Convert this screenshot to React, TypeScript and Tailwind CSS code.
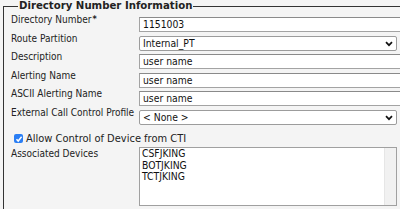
import React from "react";

function TextInput({ value }: { value: string }) {
  return (
    <div className="h-[15px] w-[275px] shrink-0 bg-white border border-[#a3a3a3] border-t-[#8a8a8a] flex items-center pl-[3px] leading-none text-[10.3px] text-[#111]">
      {value}
    </div>
  );
}

function Select({ value }: { value: string }) {
  return (
    <div className="h-[15px] w-[258px] shrink-0 bg-white border border-[#9c9c9c] rounded-[2px] flex items-center justify-between pl-[3px] pr-[3px] leading-none text-[10.3px] text-[#111]">
      <span>{value}</span>
      <svg width="8" height="6" viewBox="0 0 8 6" className="mt-[1px]">
        <path d="M1 1.2 L4 4.2 L7 1.2" fill="none" stroke="#111" strokeWidth="1.7" />
      </svg>
    </div>
  );
}

function Row({ label, children, h, star }: { label: string; children: React.ReactNode; h: string; star?: boolean }) {
  return (
    <div className={`flex items-start ${h}`}>
      <div className="w-[128px] shrink-0 -mt-[3px] leading-[11px] text-[10px] text-[#222] whitespace-nowrap">
        {label}
        {star && <sup className="font-bold text-[9px] ml-[1px] relative -top-[1px]">*</sup>}
      </div>
      {children}
    </div>
  );
}

export default function App() {
  return (
    <div className="w-[400px] h-[209px] overflow-hidden bg-[#f4f4f4] font-['DejaVu_Sans_Condensed','DejaVu_Sans',sans-serif] text-[#222]">
      <fieldset className="ml-[3px] border-l border-t border-[#333] pl-[7px] pt-[5px] h-[240px]">
        <legend className="ml-[7px] px-[1px] font-bold text-[11.3px] leading-[12px] text-[#222]">
          Directory Number Information
        </legend>
        <Row label="Directory Number" h="h-[19px]" star>
          <TextInput value="1151003" />
        </Row>
        <Row label="Route Partition" h="h-[18px]">
          <Select value="Internal_PT" />
        </Row>
        <Row label="Description" h="h-[19px]">
          <TextInput value="user name" />
        </Row>
        <Row label="Alerting Name" h="h-[18px]">
          <TextInput value="user name" />
        </Row>
        <Row label="ASCII Alerting Name" h="h-[19px]">
          <TextInput value="user name" />
        </Row>
        <Row label="External Call Control Profile" h="h-[22px]">
          <Select value="< None >" />
        </Row>
        <div className="flex items-center h-[13px] ml-[3px]">
          <span className="w-[9px] h-[9px] rounded-[2px] bg-[#2a7ef4] flex items-center justify-center">
            <svg width="8" height="8" viewBox="0 0 8 8">
              <path d="M1.5 4.2 L3.2 6 L6.6 1.8" fill="none" stroke="white" strokeWidth="1.5" />
            </svg>
          </span>
          <span className="ml-[3px] text-[11px] leading-[11px] whitespace-nowrap">Allow Control of Device from CTI</span>
        </div>
        <div className="flex items-start mt-[2px]">
          <div className="w-[128px] shrink-0 mt-[1px] leading-[11px] text-[10px]">Associated Devices</div>
          <div className="w-[258px] h-[59px] shrink-0 bg-white border border-[#a0a0a0] flex">
            <div className="flex-1 pl-[2px] text-[10.3px] leading-[11.5px] text-[#111]">
              <div>CSFJKING</div>
              <div>BOTJKING</div>
              <div>TCTJKING</div>
            </div>
            <div className="w-[12px] bg-[#f1f1f1] border-l border-[#e6e6e6]" />
          </div>
        </div>
      </fieldset>
    </div>
  );
}
